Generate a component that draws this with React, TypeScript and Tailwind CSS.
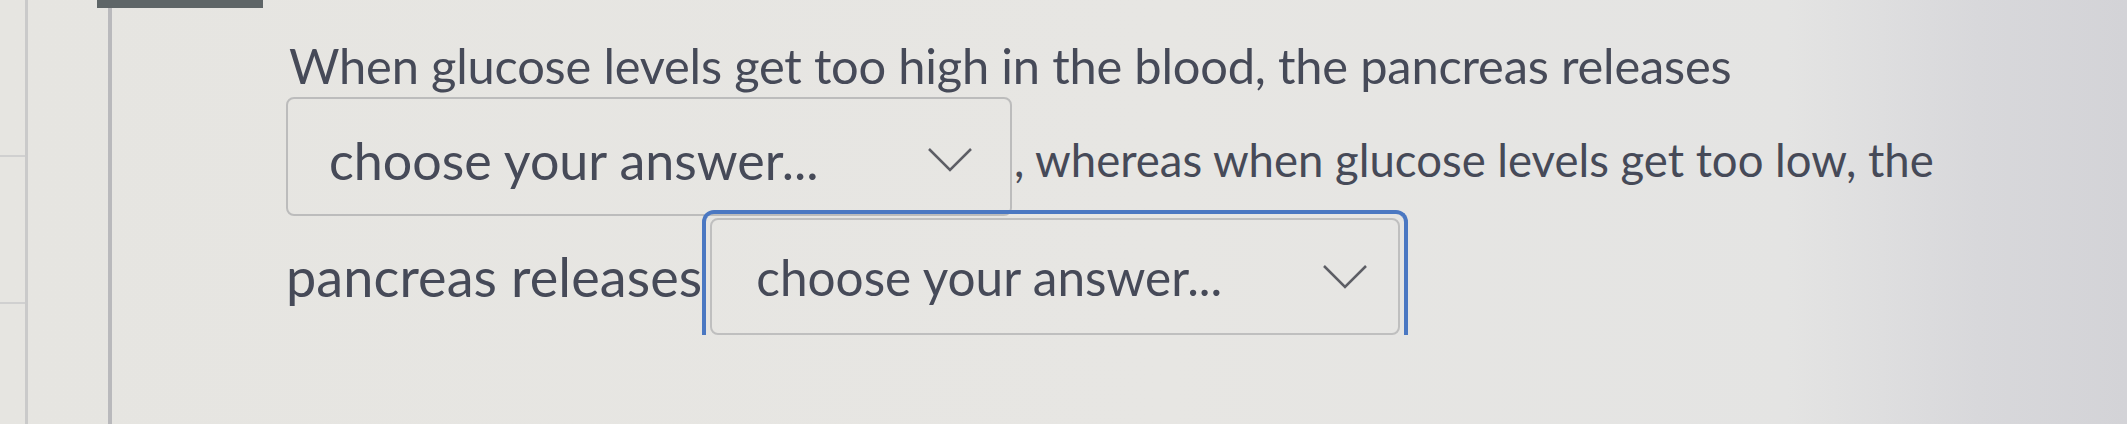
import type { FC } from "react";

const Chevron: FC = () => (
  <svg width="46" height="25" viewBox="0 0 46 25" fill="none" className="shrink-0">
    <path d="M2 2 L23 23 L44 2" stroke="#5d5e65" strokeWidth="2.5" strokeLinejoin="miter" />
  </svg>
);

const App: FC = () => {
  return (
    <main
      className="
        relative flex h-[424px] w-[2127px] overflow-hidden
        bg-[linear-gradient(90deg,#e6e5e1_0%,#e7e6e3_55%,#e4e4e3_84%,#d8d8db_93%,#d3d3d7_100%)]
        font-['Lato','Open_Sans',sans-serif] text-[#464a58]
      "
    >
      {/* far left strip with short dividers */}
      <div className="flex w-[28px] shrink-0 flex-col border-r-[3px] border-[#cacaca]">
        <div className="h-[157px] border-b-2 border-[#d0d0d0]" />
        <div className="h-[147px] border-b-2 border-[#d0d0d0]" />
        <div className="flex-1" />
      </div>

      {/* side panel */}
      <div className="w-[84px] shrink-0 border-r-4 border-[#b9b9bc]" />

      {/* dark tab on top */}
      <div className="absolute left-[97px] top-0 h-[8px] w-[166px] bg-[#5e6567]" />

      {/* question */}
      <section className="flex flex-col pl-[174px] pt-[36px] leading-[58px]">
        <p className="whitespace-nowrap pl-[3px] text-[48.8px] tracking-[-0.2px]">
          When glucose levels get too high in the blood, the pancreas releases
        </p>

        <div className="mt-[3px] flex items-center whitespace-nowrap">
          <div className="flex h-[119px] w-[726px] shrink-0 items-center justify-between rounded-[8px] border-2 border-[#bcbcbc] pl-[41px] pr-[37px] pt-[6px] text-[52px]">
            <span>choose your answer...</span>
            <Chevron />
          </div>
          <span className="pl-[2px] pt-[6px] text-[45.5px]">, whereas when glucose levels get too low, the</span>
        </div>

        <div className="-mt-[6px] flex items-center whitespace-nowrap">
          <span className="pt-[8px] text-[54px] tracking-[0.1px]">pancreas releases</span>
          <div className="shrink-0 rounded-t-[12px] border-x-4 border-t-4 border-[#4b78c2] px-[4px] pt-[4px]">
            <div className="flex h-[117px] w-[690px] items-center justify-between rounded-[8px] border-2 border-[#bfbfbf] pl-[44px] pr-[30px] text-[49.5px]">
              <span>choose your answer...</span>
              <Chevron />
            </div>
          </div>
        </div>
      </section>
    </main>
  );
};

export default App;
